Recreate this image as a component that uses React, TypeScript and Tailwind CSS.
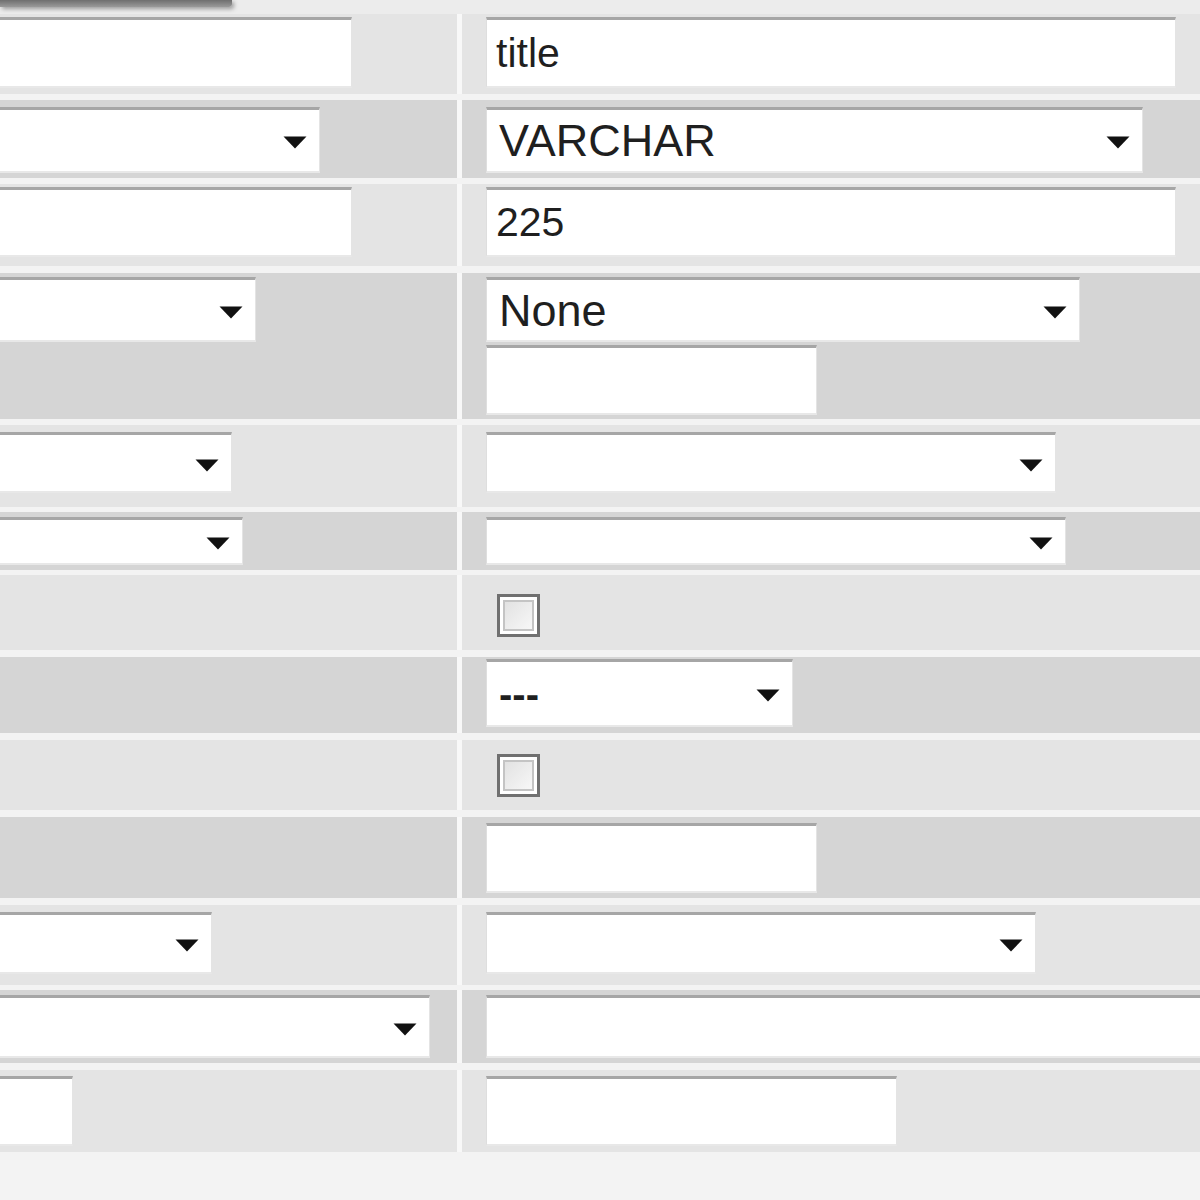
import React from "react";

type Campo = {
  tipo: "input" | "select" | "check";
  cls: string;
  texto?: string;
  textoCls?: string;
};

type Fila = {
  cls: string;
  oscura: boolean;
  izq?: Campo;
  der: Campo[];
};

const filas: Fila[] = [
  {
    cls: "h-[80px]",
    oscura: false,
    izq: { tipo: "input", cls: "w-[356px] h-[71px] mt-[3px]" },
    der: [{ tipo: "input", cls: "w-[690px] h-[71px] mt-[3px]", texto: "title", textoCls: "text-[41px] pl-[9px]" }],
  },
  {
    cls: "mt-[6px] h-[78px]",
    oscura: true,
    izq: { tipo: "select", cls: "w-[324px] h-[66px] mt-[7px]" },
    der: [{ tipo: "select", cls: "w-[657px] h-[66px] mt-[7px]", texto: "VARCHAR", textoCls: "text-[45px] pl-[12px]" }],
  },
  {
    cls: "mt-[6px] h-[82px]",
    oscura: false,
    izq: { tipo: "input", cls: "w-[356px] h-[70px] mt-[3px]" },
    der: [{ tipo: "input", cls: "w-[690px] h-[70px] mt-[3px]", texto: "225", textoCls: "text-[41px] pl-[9px]" }],
  },
  {
    cls: "mt-[7px] h-[146px]",
    oscura: true,
    izq: { tipo: "select", cls: "w-[260px] h-[65px] mt-[4px]" },
    der: [
      { tipo: "select", cls: "w-[594px] h-[65px] mt-[4px]", texto: "None", textoCls: "text-[45px] pl-[12px]" },
      { tipo: "input", cls: "w-[331px] h-[70px] mt-[3px]" },
    ],
  },
  {
    cls: "mt-[6px] h-[82px]",
    oscura: false,
    izq: { tipo: "select", cls: "w-[236px] h-[61px] mt-[7px]" },
    der: [{ tipo: "select", cls: "w-[570px] h-[61px] mt-[7px]" }],
  },
  {
    cls: "mt-[5px] h-[58px]",
    oscura: true,
    izq: { tipo: "select", cls: "w-[247px] h-[48px] mt-[5px]" },
    der: [{ tipo: "select", cls: "w-[580px] h-[48px] mt-[5px]" }],
  },
  {
    cls: "mt-[5px] h-[75px]",
    oscura: false,
    der: [{ tipo: "check", cls: "mt-[19px] ml-[11px]" }],
  },
  {
    cls: "mt-[7px] h-[76px]",
    oscura: true,
    der: [{ tipo: "select", cls: "w-[307px] h-[68px] mt-[2px]", texto: "---", textoCls: "text-[40px] font-bold pl-[12px]" }],
  },
  {
    cls: "mt-[7px] h-[70px]",
    oscura: false,
    der: [{ tipo: "check", cls: "mt-[14px] ml-[11px]" }],
  },
  {
    cls: "mt-[7px] h-[81px]",
    oscura: true,
    der: [{ tipo: "input", cls: "w-[331px] h-[70px] mt-[6px]" }],
  },
  {
    cls: "mt-[7px] h-[80px]",
    oscura: false,
    izq: { tipo: "select", cls: "w-[216px] h-[62px] mt-[7px]" },
    der: [{ tipo: "select", cls: "w-[550px] h-[62px] mt-[7px]" }],
  },
  {
    cls: "mt-[5px] h-[73px]",
    oscura: true,
    izq: { tipo: "select", cls: "w-[434px] h-[63px] mt-[5px]" },
    der: [{ tipo: "input", cls: "w-[760px] h-[63px] mt-[5px]" }],
  },
  {
    cls: "mt-[7px] h-[82px]",
    oscura: false,
    izq: { tipo: "input", cls: "w-[77px] h-[70px] mt-[6px]" },
    der: [{ tipo: "input", cls: "w-[411px] h-[70px] mt-[6px]" }],
  },
];

function Flecha() {
  return (
    <svg width="24" height="13" viewBox="0 0 24 13" className="shrink-0">
      <path d="M0.5 0.5 H23.5 L12 12.5 Z" fill="#111" />
    </svg>
  );
}

function Control({ campo }: { campo: Campo }) {
  if (campo.tipo === "check") {
    return (
      <div className={`w-[43px] h-[43px] border-[3px] border-[#707070] bg-white p-[3px] ${campo.cls}`}>
        <div className="w-full h-full border-2 border-[#c4c4c4] bg-gradient-to-br from-[#e2e2e2] to-[#f7f7f7]" />
      </div>
    );
  }

  return (
    <div
      className={`flex items-center bg-white border-t-[3px] border-t-[#a6a6a6] border-l border-l-[#dedede] border-r border-r-[#e4e4e4] border-b-2 border-b-[#e8e8e8] ${campo.cls}`}
    >
      <span className={`flex-1 text-[#1f1f1f] leading-none ${campo.textoCls ?? ""}`}>{campo.texto}</span>
      {campo.tipo === "select" && (
        <div className="pr-[12px] pt-[4px]">
          <Flecha />
        </div>
      )}
    </div>
  );
}

function App() {
  return (
    <div
      className="w-[1200px] h-[1200px] overflow-hidden bg-[#f3f3f3]"
      style={{ fontFamily: '"Liberation Sans", Arial, sans-serif' }}
    >
      <div className="h-[14px] bg-[#ececec]">
        <div className="w-[232px] h-[7px] bg-gradient-to-b from-[#6f6f6f] to-[#9a9a9a] shadow-[2px_2px_4px_rgba(0,0,0,0.35)] rounded-br-[3px]" />
      </div>

      {filas.map((fila, index) => (
        <div key={index} className={`flex ${fila.cls}`}>
          <div
            className={`w-[457px] overflow-hidden ${fila.oscura ? "bg-[#d5d5d5]" : "bg-[#e4e4e4]"}`}
          >
            {fila.izq && (
              <div className="-ml-[4px]">
                <Control campo={fila.izq} />
              </div>
            )}
          </div>
          <div className="w-[5px] bg-[#f8f8f8]" />
          <div
            className={`flex-1 pl-[24px] overflow-hidden ${fila.oscura ? "bg-[#d5d5d5]" : "bg-[#e4e4e4]"}`}
          >
            {fila.der.map((campo, i) => (
              <Control key={i} campo={campo} />
            ))}
          </div>
        </div>
      ))}
    </div>
  );
}

export default App;
